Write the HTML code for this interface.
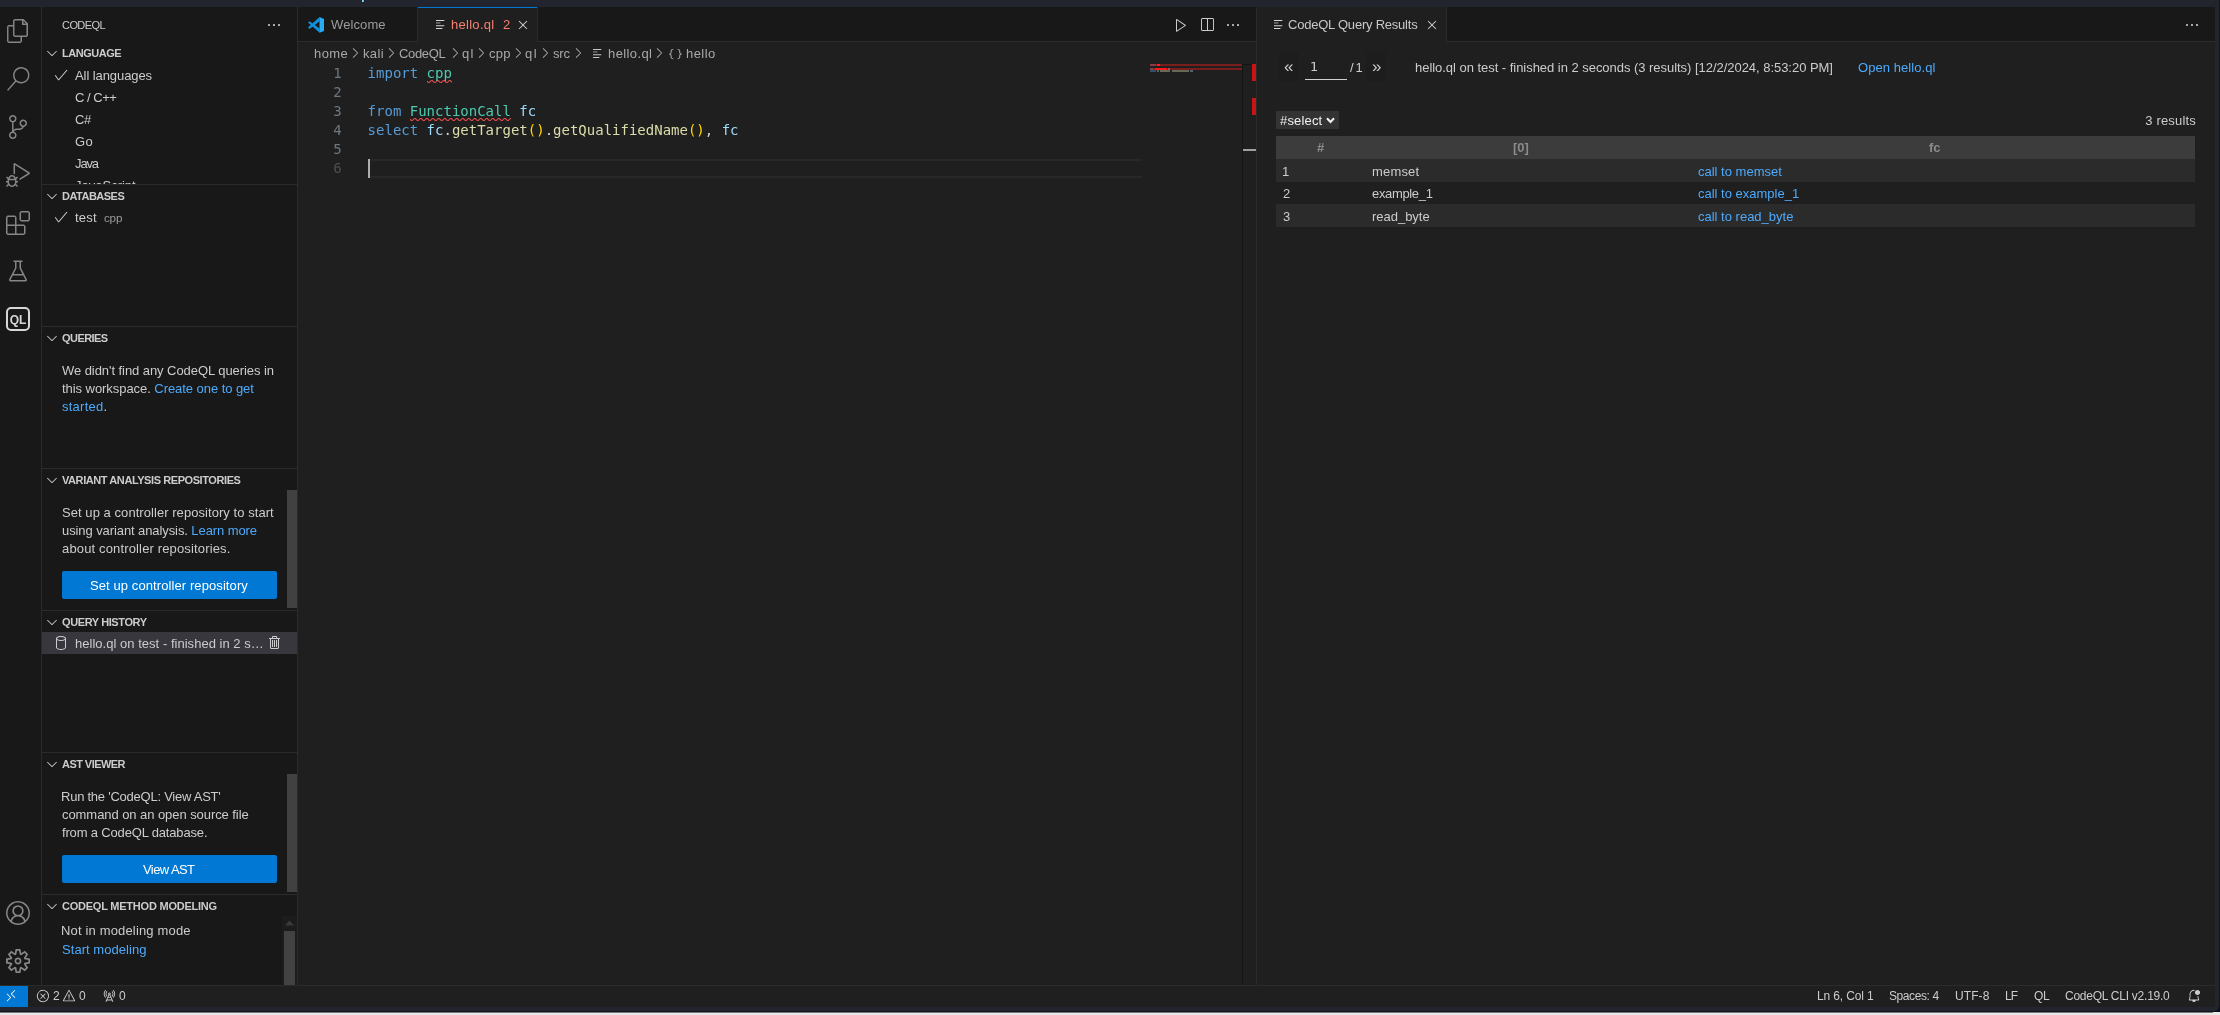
<!DOCTYPE html>
<html lang="en"><head><meta charset="utf-8"><title>hello.ql - CodeQL - Visual Studio Code</title>
<style>
html,body{margin:0;padding:0;}
body{width:2220px;height:1015px;overflow:hidden;background:#22252e;position:relative;font-family:"Liberation Sans",sans-serif;}
.b{position:absolute;}
.t{position:absolute;white-space:pre;}
.ic{position:absolute;display:block;overflow:visible;}
a{color:inherit;text-decoration:none;}
#app{position:absolute;left:0;top:0;width:2220px;height:1015px;will-change:transform;}
</style></head>
<body>
<div id="app">
<div class="b" style="left:0px;top:0px;width:2220px;height:1015px;background:#e8e9eb;"></div>
<div class="b" style="left:2213px;top:1005px;width:7px;height:7px;background:#0b0e2a;"></div>
<div class="b" style="left:0px;top:0px;width:2220px;height:1012px;background:#121419;border-bottom-right-radius:6px;"></div>
<div class="b" style="left:0px;top:0px;width:2219px;height:1010.7px;background:#22252e;border-bottom-right-radius:5px;"></div>
<div class="b" style="left:0px;top:1011.7px;width:2213px;height:0.8px;background:#77787b;"></div>
<div class="b" style="left:360.8px;top:0px;width:4.2px;height:2.4px;background:#171a3a;"></div>
<div class="b" style="left:361.8px;top:0px;width:1.3px;height:2.1px;background:#8fd3f4;"></div>
<div class="b" style="left:363.1px;top:0px;width:1.2px;height:2.1px;background:#e8944a;"></div>
<div class="b" style="left:0px;top:7px;width:2215px;height:1000px;background:#1f1f1f;"></div>
<div class="b" style="left:0px;top:7px;width:41px;height:978px;background:#181818;"></div>
<div class="b" style="left:41px;top:7px;width:1px;height:978px;background:#2b2b2b;"></div>
<div class="b" style="left:42px;top:7px;width:255px;height:978px;background:#181818;"></div>
<div class="b" style="left:297px;top:7px;width:1px;height:978px;background:#2b2b2b;"></div>
<div class="b" style="left:298px;top:7px;width:958px;height:35px;background:#181818;border-bottom:1px solid #2b2b2b;box-sizing:border-box;"></div>
<div class="b" style="left:1257px;top:7px;width:958px;height:35px;background:#181818;border-bottom:1px solid #2b2b2b;box-sizing:border-box;"></div>
<div class="b" style="left:1256px;top:7px;width:1px;height:978px;background:#2b2b2b;"></div>
<div class="b" style="left:0px;top:985px;width:2215px;height:22px;background:#1f1f1f;border-top:1px solid #2b2b2b;box-sizing:border-box;"></div>
<div class="b" style="left:0px;top:986px;width:28px;height:21px;background:#0078d4;"></div>
<svg class="ic" style="left:6px;top:19px;width:24px;height:24px;" viewBox="0 0 16 16"><path fill="#868686" d="M11.68 0H5.65L4.69 1.01V4H1.65L0.69 5.01V15.04L1.65 16H9.71L10.67 15.04V12H13.81L14.67 11.04V2.99ZM11.68 1.39 13.28 2.99H11.68ZM9.65 14.99H1.65V5.01H4.69V11.04L5.65 12H9.65ZM13.65 10.99H5.65V1.01H10.67V4H13.65Z"/></svg>
<svg class="ic" style="left:6px;top:67px;width:24px;height:24px;" viewBox="0 0 16 16"><path fill="#868686" d="M10.19 0Q8.53 0 7.17 0.88Q5.81 1.76 5.15 3.25Q4.48 4.75 4.72 6.35Q4.96 7.95 6.03 9.12L0.69 15.25L1.44 15.89L6.77 9.81Q8.21 10.93 10 10.99Q11.79 11.04 13.28 10.03Q14.77 9.01 15.36 7.31Q15.95 5.6 15.41 3.87Q14.88 2.13 13.41 1.07Q11.95 0 10.19 0ZM10.19 9.97Q8.96 9.97 7.92 9.39Q6.88 8.8 6.27 7.76Q5.65 6.72 5.65 5.49Q5.65 4.27 6.27 3.23Q6.88 2.19 7.92 1.6Q8.96 1.01 10.19 1.01Q11.41 1.01 12.43 1.6Q13.44 2.19 14.05 3.23Q14.67 4.27 14.67 5.49Q14.67 6.72 14.05 7.76Q13.44 8.8 12.43 9.41Q11.41 10.03 10.19 10.03Z"/></svg>
<svg class="ic" style="left:6px;top:115px;width:24px;height:24px;" viewBox="0 0 16 16"><path fill="#868686" d="M14.03 5.49Q14.03 4.8 13.65 4.19Q13.28 3.57 12.64 3.25Q12 2.93 11.31 2.99Q10.61 3.04 10.03 3.47Q9.44 3.89 9.2 4.56Q8.96 5.23 9.07 5.92Q9.17 6.61 9.65 7.12Q10.13 7.63 10.83 7.84Q10.56 8.37 10.08 8.67Q9.6 8.96 9.01 8.96H7.04Q5.87 8.96 5.01 9.76V4.91Q5.97 4.75 6.53 3.97Q7.09 3.2 7.01 2.24Q6.93 1.28 6.21 0.64Q5.49 0 4.53 0Q3.57 0 2.85 0.64Q2.13 1.28 2.05 2.24Q1.97 3.2 2.53 3.97Q3.09 4.75 4.05 4.91V10.99Q3.09 11.2 2.51 11.95Q1.92 12.69 2 13.65Q2.08 14.61 2.75 15.28Q3.41 15.95 4.37 16Q5.33 16.05 6.08 15.47Q6.83 14.88 6.99 13.92Q7.15 12.96 6.67 12.16Q6.19 11.36 5.23 11.09Q5.49 10.56 5.97 10.27Q6.45 9.97 7.04 9.97H9.01Q9.97 9.97 10.75 9.41Q11.52 8.85 11.84 7.95Q12.75 7.84 13.39 7.12Q14.03 6.4 14.03 5.49ZM3.04 2.51Q3.04 1.87 3.47 1.44Q3.89 1.01 4.53 1.01Q5.17 1.01 5.6 1.44Q6.03 1.87 6.03 2.48Q6.03 3.09 5.6 3.55Q5.17 4 4.53 4Q3.89 4 3.47 3.55Q3.04 3.09 3.04 2.51ZM6.03 13.44Q6.03 14.08 5.6 14.51Q5.17 14.93 4.53 14.93Q3.89 14.93 3.47 14.51Q3.04 14.08 3.04 13.47Q3.04 12.85 3.47 12.4Q3.89 11.95 4.53 11.95Q5.17 11.95 5.6 12.4Q6.03 12.85 6.03 13.44ZM11.52 6.99Q10.88 6.99 10.45 6.53Q10.03 6.08 10.03 5.47Q10.03 4.85 10.45 4.43Q10.88 4 11.49 4Q12.11 4 12.56 4.43Q13.01 4.85 13.01 5.47Q13.01 6.08 12.56 6.53Q12.11 6.99 11.52 6.99Z"/></svg>
<svg class="ic" style="left:6px;top:163px;width:24px;height:24px;" viewBox="0 0 16 16"><path fill="#868686" d="M7.31 9.01 6.4 9.87Q6.19 9.07 5.52 8.53Q4.85 8 4 8Q3.15 8 2.48 8.53Q1.81 9.07 1.6 9.87L0.69 9.01L0 9.71L1.17 10.83L1.01 10.99V12H0V13.01H1.01V13.07Q1.07 13.55 1.28 14.03L0 15.31L0.69 16L1.81 14.88Q2.19 15.41 2.77 15.71Q3.36 16 4 16Q4.64 16 5.23 15.71Q5.81 15.41 6.19 14.88L7.31 16L8 15.31L6.72 13.97Q6.93 13.55 6.99 13.01V12.96H8V12H6.99V10.99L6.88 10.83L8 9.71ZM4 9.01Q4.64 9.01 5.07 9.44Q5.49 9.87 5.49 10.51H2.51Q2.51 9.87 2.93 9.44Q3.36 9.01 4 9.01ZM6.03 13.01Q5.92 13.81 5.36 14.37Q4.8 14.93 4 14.99Q3.2 14.93 2.64 14.37Q2.08 13.81 2.03 13.01V11.52H6.03ZM15.84 6.4V7.25L9.01 11.57V10.4L14.67 6.83L6.03 1.33V7.63Q5.55 7.31 5.01 7.15V0.43L5.76 0Z"/></svg>
<svg class="ic" style="left:6px;top:211px;width:24px;height:24px;" viewBox="0 0 16 16"><path fill="#868686" d="M9.01 1.01 10.03 0H14.99L16 1.01V5.97L14.99 6.99H10.03L9.01 5.97ZM10.03 1.01V5.97H14.99V1.01ZM0 9.97V4L1.01 2.99H6.03L6.99 4V9.01H12L13.01 9.97V14.99L12 16H1.01L0 14.99ZM6.03 9.01V4H1.01V9.01ZM6.03 9.97H1.01V14.99H6.03ZM6.99 14.99H12V9.97H6.99Z"/></svg>
<svg class="ic" style="left:6px;top:259px;width:24px;height:24px;" viewBox="0 0 16 16"><path fill="#868686" d="M13.87 13.55 10.03 6.03V2.03H10.99V1.01H5.01V1.97H6.03V5.97L2.08 13.55Q1.87 14.08 2.16 14.53Q2.45 14.99 2.99 14.99H13.01Q13.55 14.99 13.84 14.53Q14.13 14.08 13.87 13.55ZM6.88 6.4 6.99 6.19V2.03H9.01V6.24L10.93 10.03H5.07ZM2.99 14.03 4.53 10.99H11.47L13.01 14.03Z"/></svg>
<svg class="ic" style="left:6px;top:307px;width:24px;height:24px" viewBox="0 0 24 24"><rect x="1" y="1" width="22" height="22" rx="4" fill="none" stroke="#d7d7d7" stroke-width="2"/><text x="12" y="16.8" text-anchor="middle" font-family="Liberation Sans, sans-serif" font-weight="700" font-size="12" fill="#d7d7d7">QL</text></svg>
<svg class="ic" style="left:6px;top:901px;width:24px;height:24px;" viewBox="0 0 16 16"><path fill="#868686" d="M16 8Q16 5.81 14.93 3.97Q13.87 2.13 12.03 1.07Q10.19 0 8 0Q5.81 0 3.97 1.07Q2.13 2.13 1.07 3.97Q0 5.81 0 8Q0 9.76 0.75 11.36Q1.49 12.96 2.83 14.08L3.52 14.61Q5.55 16 8 16Q10.45 16 12.48 14.61L13.23 14.08Q14.51 12.96 15.25 11.36Q16 9.76 16 8ZM8 14.99Q5.81 14.99 4 13.71L4.05 13.33Q4.21 12.8 4.48 12.35Q4.75 11.89 5.12 11.52Q5.49 11.15 5.92 10.88Q6.35 10.61 6.91 10.48Q7.47 10.35 8 10.35Q8.8 10.35 9.57 10.64Q10.35 10.93 10.91 11.49Q11.47 12.05 11.79 12.8Q11.95 13.23 12.05 13.71Q10.24 14.99 8 14.99ZM5.55 7.57Q5.33 7.09 5.33 6.56Q5.33 6.03 5.55 5.55Q5.76 5.07 6.11 4.72Q6.45 4.37 6.93 4.13Q7.41 3.89 8 3.89Q8.59 3.89 9.04 4.11Q9.49 4.32 9.87 4.69Q10.24 5.07 10.45 5.55Q10.67 6.03 10.67 6.59Q10.67 7.15 10.45 7.6Q10.24 8.05 9.87 8.43Q9.49 8.8 9.01 9.01Q8 9.44 6.93 9.01Q6.51 8.8 6.13 8.43Q5.76 8.05 5.55 7.57ZM12.96 12.91Q12.96 12.91 12.96 12.85V12.8Q12.75 12.05 12.29 11.41Q11.84 10.77 11.2 10.29Q10.72 9.92 10.13 9.65Q10.4 9.49 10.61 9.28Q10.99 8.91 11.25 8.48Q11.79 7.63 11.73 6.56Q11.79 5.81 11.49 5.12Q11.2 4.43 10.67 3.89Q10.13 3.36 9.44 3.09Q8.75 2.83 7.97 2.83Q7.2 2.83 6.51 3.09Q5.81 3.36 5.31 3.89Q4.8 4.43 4.51 5.12Q4.21 5.81 4.21 6.56Q4.21 7.09 4.37 7.6Q4.53 8.11 4.75 8.48Q4.96 8.85 5.39 9.28Q5.6 9.49 5.87 9.71Q5.33 9.92 4.85 10.29Q4.21 10.77 3.76 11.41Q3.31 12.05 3.04 12.85V12.91Q2.08 11.95 1.55 10.67Q1.01 9.39 1.01 8Q1.01 6.08 1.95 4.48Q2.88 2.88 4.48 1.95Q6.08 1.01 8 1.01Q9.92 1.01 11.52 1.95Q13.12 2.88 14.05 4.48Q14.99 6.08 14.99 8Q14.99 9.39 14.48 10.67Q13.97 11.95 12.96 12.91Z"/></svg>
<svg class="ic" style="left:6px;top:949px;width:24px;height:24px;" viewBox="0 0 16 16"><path fill="#868686" d="M13.23 5.81 16 6.4V9.6L13.23 10.19L14.83 12.53L12.53 14.77L10.19 13.23L9.6 16H6.4L5.81 13.23L3.47 14.83L1.23 12.53L2.77 10.19L0 9.6V6.4L2.77 5.81L1.23 3.47L3.47 1.17L5.81 2.77L6.4 0H9.6L10.19 2.77L12.53 1.17L14.83 3.47ZM12.21 9.23 14.88 8.69V7.36L12.21 6.77L11.84 5.92L13.33 3.63L12.43 2.67L10.13 4.21L9.23 3.84L8.69 1.17H7.36L6.83 3.84L5.97 4.21L3.68 2.67L2.72 3.63L4.27 5.92L3.89 6.77L1.23 7.36V8.69L3.89 9.23L4.27 10.08L2.72 12.37L3.68 13.33L5.97 11.79L6.83 12.16L7.36 14.83H8.69L9.23 12.16L10.13 11.79L12.43 13.33L13.33 12.37L11.84 10.08ZM6.72 6.08Q7.31 5.71 8 5.71Q8.96 5.71 9.63 6.37Q10.29 7.04 10.29 8Q10.29 8.8 9.76 9.44Q9.23 10.08 8.43 10.24Q7.63 10.4 6.91 10.03Q6.19 9.65 5.89 8.88Q5.6 8.11 5.81 7.33Q6.03 6.56 6.72 6.08ZM7.36 8.96Q7.68 9.12 8 9.12Q8.48 9.12 8.8 8.8Q9.12 8.48 9.12 8.03Q9.12 7.57 8.88 7.28Q8.64 6.99 8.24 6.91Q7.84 6.83 7.47 7.01Q7.09 7.2 6.93 7.57Q6.77 7.95 6.91 8.35Q7.04 8.75 7.36 8.96Z"/></svg>
<svg class="ic" style="left:266px;top:17px;width:16px;height:16px;" viewBox="0 0 16 16"><path fill="#cccccc" d="M4 8Q4 8.43 3.71 8.72Q3.41 9.01 2.99 9.01Q2.56 9.01 2.29 8.72Q2.03 8.43 2.03 8Q2.03 7.57 2.29 7.28Q2.56 6.99 2.99 6.99Q3.41 6.99 3.71 7.28Q4 7.57 4 8ZM9.01 8Q9.01 8.43 8.72 8.72Q8.43 9.01 8 9.01Q7.57 9.01 7.28 8.72Q6.99 8.43 6.99 8Q6.99 7.57 7.28 7.28Q7.57 6.99 8 6.99Q8.43 6.99 8.72 7.28Q9.01 7.57 9.01 8ZM14.03 8Q14.03 8.43 13.73 8.72Q13.44 9.01 13.01 9.01Q12.59 9.01 12.29 8.72Q12 8.43 12 8Q12 7.57 12.29 7.28Q12.59 6.99 13.01 6.99Q13.44 6.99 13.73 7.28Q14.03 7.57 14.03 8Z"/></svg>
<svg class="ic" style="left:44px;top:44.9px;width:16px;height:16px;" viewBox="0 0 16 16"><path fill="#cccccc" d="M8 10.08 12.32 5.71 12.96 6.35 8.27 10.99H7.68L2.99 6.35L3.63 5.71Z"/></svg>
<svg class="ic" style="left:53px;top:67.1px;width:16px;height:16px;" viewBox="0 0 16 16"><path fill="#cccccc" d="M14.45 3.31 5.97 13.33 5.17 13.28 1.81 8.53 2.61 7.95 5.6 12.16 13.65 2.67Z"/></svg>
<div class="b" style="left:42px;top:172px;width:255px;height:12px;overflow:hidden"><span class="t" style="left:33px;top:5.5px;font:400 13px/15px 'Liberation Sans',sans-serif;color:#cccccc">JavaScript</span></div>
<div class="b" style="left:42px;top:184px;width:255px;height:1px;background:#2b2b2b;"></div>
<svg class="ic" style="left:44px;top:188.2px;width:16px;height:16px;" viewBox="0 0 16 16"><path fill="#cccccc" d="M8 10.08 12.32 5.71 12.96 6.35 8.27 10.99H7.68L2.99 6.35L3.63 5.71Z"/></svg>
<svg class="ic" style="left:53px;top:209.1px;width:16px;height:16px;" viewBox="0 0 16 16"><path fill="#cccccc" d="M14.45 3.31 5.97 13.33 5.17 13.28 1.81 8.53 2.61 7.95 5.6 12.16 13.65 2.67Z"/></svg>
<div class="b" style="left:42px;top:326px;width:255px;height:1px;background:#2b2b2b;"></div>
<svg class="ic" style="left:44px;top:329.79999999999995px;width:16px;height:16px;" viewBox="0 0 16 16"><path fill="#cccccc" d="M8 10.08 12.32 5.71 12.96 6.35 8.27 10.99H7.68L2.99 6.35L3.63 5.71Z"/></svg>
<div class="b" style="left:42px;top:468px;width:255px;height:1px;background:#2b2b2b;"></div>
<svg class="ic" style="left:44px;top:472.09999999999997px;width:16px;height:16px;" viewBox="0 0 16 16"><path fill="#cccccc" d="M8 10.08 12.32 5.71 12.96 6.35 8.27 10.99H7.68L2.99 6.35L3.63 5.71Z"/></svg>
<div class="b" style="left:287px;top:490px;width:10px;height:118px;background:#414141;"></div>
<div class="b" style="left:62px;top:571px;width:215px;height:28px;background:#0078d4;border-radius:2px;"></div>
<div class="b" style="left:42px;top:610px;width:255px;height:1px;background:#2b2b2b;"></div>
<svg class="ic" style="left:44px;top:613.7px;width:16px;height:16px;" viewBox="0 0 16 16"><path fill="#cccccc" d="M8 10.08 12.32 5.71 12.96 6.35 8.27 10.99H7.68L2.99 6.35L3.63 5.71Z"/></svg>
<div class="b" style="left:42px;top:632px;width:255px;height:22px;background:#37373d;"></div>
<svg class="ic" style="left:53px;top:635px;width:16px;height:16px;" viewBox="0 0 16 16"><path fill="#cccccc" d="M13.01 3.52Q13.01 2.83 12.35 2.24Q11.68 1.65 10.51 1.33Q9.33 1.01 8 1.01Q6.67 1.01 5.49 1.33Q4.32 1.65 3.65 2.24Q2.99 2.83 2.99 3.52L3.04 3.63H2.99V12.48L3.04 12.85Q3.25 13.76 4.67 14.37Q6.08 14.99 8 14.99Q9.92 14.99 11.33 14.37Q12.75 13.76 12.96 12.85L13.01 12.48V3.63H12.96ZM8 2.03Q9.12 2.03 10.13 2.29Q10.99 2.51 11.49 2.88Q12 3.25 12 3.52Q12 3.79 11.49 4.13Q10.99 4.48 10.13 4.69Q9.12 4.96 8 4.96Q6.88 4.96 5.87 4.69Q5.01 4.48 4.51 4.13Q4 3.79 4 3.52Q4 3.25 4.51 2.88Q5.01 2.51 5.87 2.29Q6.88 2.03 8 2.03ZM12 12.48 11.95 12.64Q11.89 12.91 11.39 13.23Q10.88 13.55 10.08 13.76Q9.12 14.03 8 14.03Q6.88 14.03 5.92 13.76Q5.12 13.55 4.61 13.23Q4.11 12.91 4.05 12.64L4 12.48V5.01Q5.87 6.08 8 6.03Q10.13 6.08 12 4.96Z"/></svg>
<svg class="ic" style="left:267px;top:635px;width:16px;height:16px;" viewBox="0 0 16 16"><path fill="#cccccc" d="M10.03 2.99H13.01V4H12V13.01L10.99 13.97H4L2.99 13.01V4H2.03V2.99H5.01V1.97Q5.01 1.6 5.31 1.31Q5.6 1.01 6.03 1.01H9.01Q9.44 1.01 9.73 1.31Q10.03 1.6 10.03 1.97ZM9.01 1.97H6.03V2.99H9.01ZM4 13.01H10.99V4H4ZM6.03 5.01H5.01V12H6.03ZM6.99 5.01H8V12H6.99ZM9.01 5.01H10.03V12H9.01Z"/></svg>
<div class="b" style="left:42px;top:752px;width:255px;height:1px;background:#2b2b2b;"></div>
<svg class="ic" style="left:44px;top:756.2px;width:16px;height:16px;" viewBox="0 0 16 16"><path fill="#cccccc" d="M8 10.08 12.32 5.71 12.96 6.35 8.27 10.99H7.68L2.99 6.35L3.63 5.71Z"/></svg>
<div class="b" style="left:287px;top:774px;width:10px;height:118px;background:#414141;"></div>
<div class="b" style="left:62px;top:855px;width:215px;height:28px;background:#0078d4;border-radius:2px;"></div>
<div class="b" style="left:42px;top:894px;width:255px;height:1px;background:#2b2b2b;"></div>
<svg class="ic" style="left:44px;top:897.9px;width:16px;height:16px;" viewBox="0 0 16 16"><path fill="#cccccc" d="M8 10.08 12.32 5.71 12.96 6.35 8.27 10.99H7.68L2.99 6.35L3.63 5.71Z"/></svg>
<div class="b" style="left:282px;top:916px;width:15px;height:69px;background:#1c1c1c;"></div>
<div class="b" style="left:284px;top:931px;width:11px;height:54px;background:#424242;"></div>
<svg class="ic" style="left:285px;top:920px;width:9px;height:6px" viewBox="0 0 9 6"><path d="M0 5.5 4.5 0.5 9 5.5Z" fill="#3a3a3a"/></svg>
<svg class="ic" style="left:4px;top:989.1px;width:14px;height:14px;" viewBox="0 0 16 16"><path fill="#ffffff" d="M12.91 9.55 8.91 5.6 12.91 1.6 12.27 1.01 8 5.28V5.92L12.27 10.19ZM2.99 5.6 7.09 9.71 2.99 13.76 3.63 14.4 8 9.97V9.39L3.63 5.01Z"/></svg>
<svg class="ic" style="left:36px;top:989px;width:14px;height:14px;" viewBox="0 0 16 16"><path fill="#cccccc" d="M8.59 1.01Q9.76 1.07 10.85 1.6Q11.95 2.13 12.8 2.99Q14.83 5.17 14.83 8.11Q14.83 10.4 13.23 12.48Q12.43 13.44 11.41 14.05Q10.4 14.67 9.23 14.88Q6.67 15.36 4.59 14.19Q3.52 13.6 2.72 12.69Q1.92 11.79 1.49 10.67Q1.07 9.55 0.99 8.32Q0.91 7.09 1.28 5.97Q2.08 3.52 4.11 2.19Q5.07 1.55 6.21 1.23Q7.36 0.91 8.59 1.01ZM9.12 13.92Q11.15 13.44 12.48 11.79Q13.81 9.97 13.71 8Q13.71 6.77 13.25 5.65Q12.8 4.53 12 3.68Q10.45 2.13 8.43 1.97Q7.41 1.92 6.4 2.16Q5.39 2.4 4.59 2.99Q2.88 4.27 2.27 6.35Q1.65 8.43 2.53 10.35Q3.41 12.27 5.23 13.28Q6.08 13.81 7.09 13.97Q8.11 14.13 9.12 13.92ZM7.89 7.52 10.29 5.01 10.99 5.71 8.59 8.21 10.99 10.72 10.29 11.41 7.89 8.91 5.49 11.41 4.8 10.72 7.2 8.21 4.8 5.71 5.49 5.01Z"/></svg>
<svg class="ic" style="left:62px;top:989px;width:14px;height:14px;" viewBox="0 0 16 16"><path fill="#cccccc" d="M7.57 1.01H8.43L14.99 13.28L14.56 13.97H1.44L1.01 13.28ZM8 2.29 2.29 13.01H13.71ZM8.64 12V10.99H7.36V12ZM7.36 9.97V5.97H8.64V9.97Z"/></svg>
<svg class="ic" style="left:102px;top:989px;width:14px;height:14px;" viewBox="0 0 16 16"><path fill="#cccccc" d="M2.99 5.6Q2.99 4.48 3.41 3.47Q3.84 2.45 4.64 1.71L3.89 1.01Q2.99 1.92 2.48 3.09Q1.97 4.27 1.97 5.57Q1.97 6.88 2.48 8.05Q2.99 9.23 3.89 10.13L4.64 9.44Q3.84 8.69 3.41 7.68Q2.99 6.67 2.99 5.6ZM4.05 5.6Q4.05 6.45 4.4 7.28Q4.75 8.11 5.39 8.75L6.08 8.05Q5.6 7.57 5.33 6.93Q5.07 6.29 5.07 5.6Q5.07 4.91 5.33 4.27Q5.6 3.63 6.08 3.15L5.39 2.4Q4.75 3.04 4.4 3.87Q4.05 4.69 4.05 5.6ZM11.73 8.8 10.99 8.05Q11.52 7.57 11.79 6.93Q12.05 6.29 12.05 5.6Q12.05 4.91 11.79 4.27Q11.52 3.63 10.99 3.15L11.73 2.45Q12.32 3.09 12.67 3.92Q13.01 4.75 13.01 5.63Q13.01 6.51 12.67 7.33Q12.32 8.16 11.73 8.8ZM13.07 1.01 12.37 1.71Q13.12 2.45 13.55 3.47Q13.97 4.48 13.97 5.57Q13.97 6.67 13.55 7.68Q13.12 8.69 12.37 9.44L13.07 10.13Q13.97 9.23 14.48 8.05Q14.99 6.88 14.99 5.57Q14.99 4.27 14.48 3.09Q13.97 1.92 13.07 1.01ZM9.97 5.44Q10.03 5.97 9.76 6.4L9.49 6.61L12.91 14.35L12 14.77L11.25 13.01H5.71L4.91 14.77L4 14.35L7.41 6.61Q7.15 6.29 7.04 5.87Q6.93 5.44 7.12 5.01Q7.31 4.59 7.65 4.35Q8 4.11 8.4 4.08Q8.8 4.05 9.15 4.21Q9.49 4.37 9.73 4.69Q9.97 5.01 9.97 5.44ZM8.37 5.07Q8.27 5.12 8.16 5.23Q8.05 5.33 8.03 5.47Q8 5.6 8.05 5.73Q8.11 5.87 8.24 5.95Q8.37 6.03 8.53 6.03Q8.69 6.03 8.85 5.89Q9.01 5.76 9.01 5.57Q9.01 5.39 8.91 5.28Q8.8 5.17 8.67 5.12Q8.53 5.07 8.37 5.07ZM8.64 7.15H8.37L7.47 9.07H9.49ZM10.83 12.05 9.92 10.08H7.04L6.19 12.05Z"/></svg>
<svg class="ic" style="left:2186.5px;top:989px;width:14px;height:14px;" viewBox="0 0 16 16"><path fill="#cccccc" d="M13.01 7.89Q12.53 8 12 8V8.21Q12 9.6 12.43 10.93L12.8 12H3.15L3.52 10.88Q4 9.55 4 8.21V6.03Q4 5.17 4.35 4.37Q4.69 3.57 5.31 3.01Q5.92 2.45 6.75 2.19Q7.57 1.92 8.37 2.03H8.53Q8.8 1.55 9.17 1.17Q8.85 1.07 8.48 1.01Q7.41 0.91 6.4 1.25Q5.39 1.6 4.61 2.32Q3.84 3.04 3.41 4Q2.99 4.96 2.99 6.03V8.21Q2.99 9.39 2.61 10.56L2.03 12.32L2.45 13.01H5.97Q5.97 13.81 6.56 14.4Q7.15 14.99 7.97 14.99Q8.8 14.99 9.39 14.4Q9.97 13.81 9.97 13.01H13.49L13.97 12.32L13.39 10.56Q13.01 9.39 13.01 8.21ZM8 14.03Q8.37 14.03 8.69 13.73Q9.01 13.44 8.96 13.01H6.99Q6.99 13.44 7.28 13.73Q7.57 14.03 8 14.03ZM12 6.99Q13.23 6.99 14.11 6.11Q14.99 5.23 14.99 4Q14.99 2.77 14.11 1.89Q13.23 1.01 12 1.01Q10.77 1.01 9.89 1.89Q9.01 2.77 9.01 4Q9.01 5.23 9.89 6.11Q10.77 6.99 12 6.99Z"/></svg>
<div class="b" style="left:417px;top:7px;width:1px;height:35px;background:#2b2b2b;"></div>
<svg class="ic" style="left:307px;top:16px;width:18px;height:18px" viewBox="307 16 18 18"><path fill="#0c93de" d="M319.6 17.1V21.3L309.5 28.9L308 27.45Z"/><path fill="#0c93de" d="M319.6 32.8V28.6L309.5 21.2L308 22.45Z"/><path fill="#29aaf5" d="M319.5 17.05L324 18.9V31L319.5 32.85Z"/></svg>
<div class="b" style="left:418px;top:7px;width:119px;height:35px;background:#1f1f1f;"></div>
<div class="b" style="left:418px;top:7px;width:119px;height:1px;background:#0078d4;"></div>
<div class="b" style="left:537px;top:7px;width:1px;height:35px;background:#2b2b2b;"></div>
<svg class="ic" style="left:435.8px;top:19.9px;width:8.4px;height:9.2px" viewBox="0 0 8.4 9.2"><path fill="#d4d7d6" d="M0 .1h8.3v1H0zM0 5.15h8.3v1H0zM0 7.95h6.4v1H0z"/><path fill="#d4d7d6" opacity=".7" d="M0 2.45h4.4v1H0z"/></svg>
<svg class="ic" style="left:515px;top:17px;width:16px;height:16px;" viewBox="0 0 16 16"><path fill="#cccccc" d="M8 8.69 11.63 12.37 12.37 11.63 8.69 8 12.37 4.37 11.63 3.63 8 7.31 4.37 3.63 3.63 4.37 7.31 8 3.63 11.63 4.37 12.37Z"/></svg>
<svg class="ic" style="left:1173px;top:17px;width:16px;height:16px;" viewBox="0 0 16 16"><path fill="#cccccc" d="M3.79 1.97 2.99 2.4V14.4L3.79 14.83L12.8 8.85V8ZM4 13.49V3.36L11.63 8.43Z"/></svg>
<svg class="ic" style="left:1199px;top:17px;width:16px;height:16px;" viewBox="0 0 16 16"><path fill="#cccccc" d="M14.03 1.01H2.99L2.03 1.97V13.01L2.99 13.97H14.03L14.99 13.01V1.97ZM8 13.01H2.99V1.97H8ZM14.03 13.01H9.01V1.97H14.03Z"/></svg>
<svg class="ic" style="left:1225px;top:17px;width:16px;height:16px;" viewBox="0 0 16 16"><path fill="#cccccc" d="M4 8Q4 8.43 3.71 8.72Q3.41 9.01 2.99 9.01Q2.56 9.01 2.29 8.72Q2.03 8.43 2.03 8Q2.03 7.57 2.29 7.28Q2.56 6.99 2.99 6.99Q3.41 6.99 3.71 7.28Q4 7.57 4 8ZM9.01 8Q9.01 8.43 8.72 8.72Q8.43 9.01 8 9.01Q7.57 9.01 7.28 8.72Q6.99 8.43 6.99 8Q6.99 7.57 7.28 7.28Q7.57 6.99 8 6.99Q8.43 6.99 8.72 7.28Q9.01 7.57 9.01 8ZM14.03 8Q14.03 8.43 13.73 8.72Q13.44 9.01 13.01 9.01Q12.59 9.01 12.29 8.72Q12 8.43 12 8Q12 7.57 12.29 7.28Q12.59 6.99 13.01 6.99Q13.44 6.99 13.73 7.28Q14.03 7.57 14.03 8Z"/></svg>
<svg class="ic" style="left:347.3px;top:45px;width:16px;height:16px;" viewBox="0 0 16 16"><path fill="#a9a9a9" d="M10.08 8 5.71 3.68 6.35 3.04 10.99 7.73V8.32L6.35 13.01L5.71 12.37Z"/></svg>
<svg class="ic" style="left:383.0px;top:45px;width:16px;height:16px;" viewBox="0 0 16 16"><path fill="#a9a9a9" d="M10.08 8 5.71 3.68 6.35 3.04 10.99 7.73V8.32L6.35 13.01L5.71 12.37Z"/></svg>
<svg class="ic" style="left:446.8px;top:45px;width:16px;height:16px;" viewBox="0 0 16 16"><path fill="#a9a9a9" d="M10.08 8 5.71 3.68 6.35 3.04 10.99 7.73V8.32L6.35 13.01L5.71 12.37Z"/></svg>
<svg class="ic" style="left:472.8px;top:45px;width:16px;height:16px;" viewBox="0 0 16 16"><path fill="#a9a9a9" d="M10.08 8 5.71 3.68 6.35 3.04 10.99 7.73V8.32L6.35 13.01L5.71 12.37Z"/></svg>
<svg class="ic" style="left:509.8px;top:45px;width:16px;height:16px;" viewBox="0 0 16 16"><path fill="#a9a9a9" d="M10.08 8 5.71 3.68 6.35 3.04 10.99 7.73V8.32L6.35 13.01L5.71 12.37Z"/></svg>
<svg class="ic" style="left:536.8px;top:45px;width:16px;height:16px;" viewBox="0 0 16 16"><path fill="#a9a9a9" d="M10.08 8 5.71 3.68 6.35 3.04 10.99 7.73V8.32L6.35 13.01L5.71 12.37Z"/></svg>
<svg class="ic" style="left:569.8px;top:45px;width:16px;height:16px;" viewBox="0 0 16 16"><path fill="#a9a9a9" d="M10.08 8 5.71 3.68 6.35 3.04 10.99 7.73V8.32L6.35 13.01L5.71 12.37Z"/></svg>
<svg class="ic" style="left:593.2px;top:48.6px;width:8.4px;height:9.2px" viewBox="0 0 8.4 9.2"><path fill="#c5c8c7" d="M0 .1h8.3v1H0zM0 5.15h8.3v1H0zM0 7.95h6.4v1H0z"/><path fill="#c5c8c7" opacity=".7" d="M0 2.45h4.4v1H0z"/></svg>
<svg class="ic" style="left:651.1999999999999px;top:45px;width:16px;height:16px;" viewBox="0 0 16 16"><path fill="#a9a9a9" d="M10.08 8 5.71 3.68 6.35 3.04 10.99 7.73V8.32L6.35 13.01L5.71 12.37Z"/></svg>
<svg class="ic" style="left:668.6px;top:48.8px;width:12.9px;height:10.2px" viewBox="2.03 1.97 12 12.06" preserveAspectRatio="none"><path fill="#a9a9a9" d="M6.03 2.99V1.97H5.92Q5.44 1.97 4.99 2.16Q4.53 2.35 4.21 2.69Q3.89 3.04 3.73 3.47Q3.57 3.89 3.52 4.32Q3.47 4.75 3.52 5.17V6.03Q3.52 6.35 3.41 6.61Q3.2 7.15 2.67 7.41Q2.4 7.52 2.08 7.52H2.03V8.48H2.08Q2.4 8.48 2.67 8.59V8.64Q2.93 8.75 3.09 8.91V8.96Q3.31 9.12 3.41 9.39Q3.52 9.65 3.52 9.97V10.83Q3.47 11.25 3.52 11.68V11.73Q3.57 12.11 3.73 12.53Q3.89 12.96 4.24 13.31Q4.59 13.65 5.01 13.81Q5.44 13.97 5.92 14.03H6.03V13.01H5.92Q5.6 13.01 5.33 12.91Q5.07 12.8 4.88 12.59Q4.69 12.37 4.59 12.11Q4.48 11.84 4.48 11.52V10.19Q4.48 9.87 4.43 9.55Q4.37 9.23 4.27 8.96Q4 8.37 3.52 8Q4 7.63 4.27 7.04Q4.37 6.77 4.43 6.45Q4.48 6.13 4.48 5.81V4.48Q4.48 4 4.72 3.65Q4.96 3.31 5.33 3.09Q5.6 2.99 5.92 2.99ZM10.03 13.01V13.97H10.08Q10.56 13.97 10.99 13.81Q11.41 13.65 11.76 13.31Q12.11 12.96 12.27 12.53Q12.43 12.16 12.48 11.68Q12.53 11.25 12.48 10.83V9.97Q12.48 9.65 12.59 9.39Q12.8 8.85 13.33 8.59Q13.6 8.48 13.92 8.48H14.03V7.52H13.92Q13.6 7.52 13.33 7.41V7.36Q13.07 7.25 12.91 7.09V7.04Q12.69 6.88 12.59 6.61Q12.48 6.35 12.48 6.03V5.17Q12.53 4.75 12.48 4.32V4.27Q12.43 3.89 12.27 3.47Q12.11 3.04 11.79 2.69Q11.47 2.35 11.01 2.16Q10.56 1.97 10.08 2.03H10.03V2.99H10.08Q10.4 2.99 10.67 3.09Q10.93 3.2 11.12 3.41Q11.31 3.63 11.41 3.89Q11.52 4.16 11.52 4.48V5.81Q11.52 6.13 11.57 6.45Q11.63 6.77 11.73 7.04Q12 7.63 12.48 8Q12 8.37 11.73 8.96Q11.63 9.23 11.57 9.55Q11.52 9.87 11.52 10.19V11.52Q11.52 12.16 11.09 12.59Q10.93 12.8 10.67 12.91Q10.4 13.01 10.08 13.01Z"/></svg>
<svg class="ic" style="left:427px;top:80px;width:25.3px;height:3px;overflow:hidden" viewBox="0 0 25.3 3"><defs><pattern id="sq1" width="6" height="3" patternUnits="userSpaceOnUse"><g fill="#f14c4c"><polygon points="5.5,0 2.5,3 1.1,3 4.1,0"/><polygon points="4,0 6,2 6,0.6 5.4,0"/><polygon points="0,2 1,3 2.4,3 0,0.6"/></g></pattern></defs><rect width="25.3" height="3" fill="url(#sq1)"/></svg>
<svg class="ic" style="left:410.1px;top:118px;width:101.2px;height:3px;overflow:hidden" viewBox="0 0 101.2 3"><defs><pattern id="sq2" width="6" height="3" patternUnits="userSpaceOnUse"><g fill="#f14c4c"><polygon points="5.5,0 2.5,3 1.1,3 4.1,0"/><polygon points="4,0 6,2 6,0.6 5.4,0"/><polygon points="0,2 1,3 2.4,3 0,0.6"/></g></pattern></defs><rect width="101.2" height="3" fill="url(#sq2)"/></svg>
<div class="b" style="left:368px;top:159px;width:774px;height:19px;background:transparent;border-top:2px solid #282828;border-bottom:2px solid #282828;box-sizing:border-box;"></div>
<div class="b" style="left:368px;top:159px;width:2px;height:19px;background:#aeafad;"></div>
<div class="b" style="left:1150px;top:64px;width:92px;height:2px;background:#7a1d1d;"></div>
<div class="b" style="left:1150px;top:68px;width:92px;height:2px;background:#7a1d1d;"></div>
<div class="b" style="left:1150px;top:64px;width:6px;height:2px;background:#8a3a4a;"></div>
<div class="b" style="left:1157px;top:64px;width:3px;height:2px;background:#ff1a1a;"></div>
<div class="b" style="left:1150px;top:68px;width:4px;height:2px;background:#8a3a4a;"></div>
<div class="b" style="left:1155px;top:68px;width:12px;height:2px;background:#ff1a1a;"></div>
<div class="b" style="left:1168px;top:68px;width:2px;height:2px;background:#9a5060;"></div>
<div class="b" style="left:1150px;top:70px;width:6px;height:2px;background:#3f6f9a;opacity:.6;"></div>
<div class="b" style="left:1157px;top:70px;width:2px;height:2px;background:#6f94ad;opacity:.6;"></div>
<div class="b" style="left:1160px;top:70px;width:10px;height:2px;background:#9a9a7c;opacity:.6;"></div>
<div class="b" style="left:1172px;top:70px;width:17px;height:2px;background:#9a9a7c;opacity:.6;"></div>
<div class="b" style="left:1190px;top:70px;width:3px;height:2px;background:#6f94ad;opacity:.6;"></div>
<div class="b" style="left:1242px;top:64px;width:1px;height:921px;background:#141414;"></div>
<div class="b" style="left:1242px;top:64px;width:14px;height:1px;background:#141414;"></div>
<div class="b" style="left:1252px;top:64px;width:4px;height:17px;background:#c81414;"></div>
<div class="b" style="left:1252px;top:98px;width:4px;height:17px;background:#c81414;"></div>
<div class="b" style="left:1243px;top:149.3px;width:13px;height:2px;background:#a0a0a0;"></div>
<div class="b" style="left:1257px;top:7px;width:189px;height:35px;background:#1f1f1f;"></div>
<div class="b" style="left:1446px;top:7px;width:1px;height:35px;background:#2b2b2b;"></div>
<svg class="ic" style="left:1273.6px;top:19.9px;width:8.4px;height:9.2px" viewBox="0 0 8.4 9.2"><path fill="#d4d7d6" d="M0 .1h8.3v1H0zM0 5.15h8.3v1H0zM0 7.95h6.4v1H0z"/><path fill="#d4d7d6" opacity=".7" d="M0 2.45h4.4v1H0z"/></svg>
<svg class="ic" style="left:1424px;top:17px;width:16px;height:16px;" viewBox="0 0 16 16"><path fill="#c8c8c8" d="M8 8.69 11.63 12.37 12.37 11.63 8.69 8 12.37 4.37 11.63 3.63 8 7.31 4.37 3.63 3.63 4.37 7.31 8 3.63 11.63 4.37 12.37Z"/></svg>
<svg class="ic" style="left:2183.5px;top:17px;width:16px;height:16px;" viewBox="0 0 16 16"><path fill="#cccccc" d="M4 8Q4 8.43 3.71 8.72Q3.41 9.01 2.99 9.01Q2.56 9.01 2.29 8.72Q2.03 8.43 2.03 8Q2.03 7.57 2.29 7.28Q2.56 6.99 2.99 6.99Q3.41 6.99 3.71 7.28Q4 7.57 4 8ZM9.01 8Q9.01 8.43 8.72 8.72Q8.43 9.01 8 9.01Q7.57 9.01 7.28 8.72Q6.99 8.43 6.99 8Q6.99 7.57 7.28 7.28Q7.57 6.99 8 6.99Q8.43 6.99 8.72 7.28Q9.01 7.57 9.01 8ZM14.03 8Q14.03 8.43 13.73 8.72Q13.44 9.01 13.01 9.01Q12.59 9.01 12.29 8.72Q12 8.43 12 8Q12 7.57 12.29 7.28Q12.59 6.99 13.01 6.99Q13.44 6.99 13.73 7.28Q14.03 7.57 14.03 8Z"/></svg>
<div class="b" style="left:1279px;top:52px;width:20px;height:30px;background:#1d1d1d;"></div>
<div class="b" style="left:1366px;top:52px;width:20px;height:30px;background:#1d1d1d;"></div>
<div class="b" style="left:1305px;top:78.7px;width:42px;height:1.5px;background:#d0d0d0;"></div>
<div class="b" style="left:1276px;top:111px;width:63px;height:18px;background:#333333;"></div>
<svg class="ic" style="left:1326px;top:116.5px;width:9px;height:7px" viewBox="0 0 9 7"><path d="M1 1.2 4.5 5 8 1.2" fill="none" stroke="#f0f0f0" stroke-width="2.1"/></svg>
<div class="b" style="left:1276px;top:136px;width:919px;height:23px;background:#3c3c3c;"></div>
<div class="b" style="left:1276px;top:159px;width:919px;height:22.7px;background:#2b2b2b;"></div>
<div class="b" style="left:1276px;top:204.3px;width:919px;height:22.7px;background:#2b2b2b;"></div>
<span class="t" style="top:19px;font:400 11px/12px 'Liberation Sans', sans-serif;color:#cccccc;left:62px;letter-spacing:-0.566px;">CODEQL</span>
<span class="t" style="top:47px;font:700 11px/12px 'Liberation Sans', sans-serif;color:#cccccc;left:62px;letter-spacing:-0.483px;">LANGUAGE</span>
<span class="t" style="top:68px;font:400 13px/15px 'Liberation Sans', sans-serif;color:#cccccc;left:75px;letter-spacing:-0.080px;">All languages</span>
<span class="t" style="top:90px;font:400 13px/15px 'Liberation Sans', sans-serif;color:#cccccc;left:75px;letter-spacing:-0.482px;">C / C++</span>
<span class="t" style="top:112px;font:400 13px/15px 'Liberation Sans', sans-serif;color:#cccccc;left:75px;letter-spacing:-0.295px;">C#</span>
<span class="t" style="top:134px;font:400 13px/15px 'Liberation Sans', sans-serif;color:#cccccc;left:75px;letter-spacing:0.458px;">Go</span>
<span class="t" style="top:156px;font:400 13px/15px 'Liberation Sans', sans-serif;color:#cccccc;left:75px;letter-spacing:-1.119px;">Java</span>
<span class="t" style="top:190px;font:700 11px/12px 'Liberation Sans', sans-serif;color:#cccccc;left:62px;letter-spacing:-0.506px;">DATABASES</span>
<span class="t" style="top:210px;font:400 13px/15px 'Liberation Sans', sans-serif;color:#cccccc;left:75px;letter-spacing:0.213px;">test</span>
<span class="t" style="top:211px;font:400 11.7px/13px 'Liberation Sans', sans-serif;color:#9a9a9a;left:104px;letter-spacing:-0.228px;">cpp</span>
<span class="t" style="top:332px;font:700 11px/12px 'Liberation Sans', sans-serif;color:#cccccc;left:62px;letter-spacing:-0.555px;">QUERIES</span>
<span class="t" style="top:363px;font:400 13px/15px 'Liberation Sans', sans-serif;color:#cccccc;left:62px;letter-spacing:-0.063px;">We didn't find any CodeQL queries in</span>
<span class="t" style="top:381px;font:400 13px/15px 'Liberation Sans', sans-serif;color:#cccccc;left:62px;letter-spacing:-0.055px;">this workspace. <a style="color:#4daafc">Create one to get</a></span>
<span class="t" style="top:399px;font:400 13px/15px 'Liberation Sans', sans-serif;color:#cccccc;left:62px;letter-spacing:0.256px;"><a style="color:#4daafc">started</a>.</span>
<span class="t" style="top:474px;font:700 11px/12px 'Liberation Sans', sans-serif;color:#cccccc;left:62px;letter-spacing:-0.422px;">VARIANT ANALYSIS REPOSITORIES</span>
<span class="t" style="top:505px;font:400 13px/15px 'Liberation Sans', sans-serif;color:#cccccc;left:62px;letter-spacing:0.056px;">Set up a controller repository to start</span>
<span class="t" style="top:523px;font:400 13px/15px 'Liberation Sans', sans-serif;color:#cccccc;left:62px;letter-spacing:-0.090px;">using variant analysis. <a style="color:#4daafc">Learn more</a></span>
<span class="t" style="top:541px;font:400 13px/15px 'Liberation Sans', sans-serif;color:#cccccc;left:62px;letter-spacing:0.149px;">about controller repositories.</span>
<span class="t" style="top:578px;font:400 13px/15px 'Liberation Sans', sans-serif;color:#ffffff;left:90px;letter-spacing:0.091px;">Set up controller repository</span>
<span class="t" style="top:616px;font:700 11px/12px 'Liberation Sans', sans-serif;color:#cccccc;left:62px;letter-spacing:-0.402px;">QUERY HISTORY</span>
<span class="t" style="top:636px;font:400 13px/15px 'Liberation Sans', sans-serif;color:#cccccc;left:75px;letter-spacing:0.026px;">hello.ql on test - finished in 2 s…</span>
<span class="t" style="top:758px;font:700 11px/12px 'Liberation Sans', sans-serif;color:#cccccc;left:62px;letter-spacing:-0.550px;">AST VIEWER</span>
<span class="t" style="top:789px;font:400 13px/15px 'Liberation Sans', sans-serif;color:#cccccc;left:61px;letter-spacing:-0.243px;">Run the 'CodeQL: View AST'</span>
<span class="t" style="top:807px;font:400 13px/15px 'Liberation Sans', sans-serif;color:#cccccc;left:62px;letter-spacing:-0.065px;">command on an open source file</span>
<span class="t" style="top:825px;font:400 13px/15px 'Liberation Sans', sans-serif;color:#cccccc;left:62px;letter-spacing:-0.164px;">from a CodeQL database.</span>
<span class="t" style="top:862px;font:400 13px/15px 'Liberation Sans', sans-serif;color:#ffffff;left:143px;letter-spacing:-0.583px;">View AST</span>
<span class="t" style="top:900px;font:700 11px/12px 'Liberation Sans', sans-serif;color:#cccccc;left:62px;letter-spacing:-0.227px;">CODEQL METHOD MODELING</span>
<span class="t" style="top:923px;font:400 13px/15px 'Liberation Sans', sans-serif;color:#cccccc;left:61px;letter-spacing:0.162px;">Not in modeling mode</span>
<span class="t" style="top:942px;font:400 13px/15px 'Liberation Sans', sans-serif;color:#4daafc;left:62px;letter-spacing:0.047px;">Start modeling</span>
<span class="t" style="top:989px;font:400 12px/14px 'Liberation Sans', sans-serif;color:#cccccc;left:53px;">2</span>
<span class="t" style="top:989px;font:400 12px/14px 'Liberation Sans', sans-serif;color:#cccccc;left:79px;">0</span>
<span class="t" style="top:989px;font:400 12px/14px 'Liberation Sans', sans-serif;color:#cccccc;left:119px;">0</span>
<span class="t" style="top:989px;font:400 12px/14px 'Liberation Sans', sans-serif;color:#cccccc;left:1817px;letter-spacing:-0.137px;">Ln 6, Col 1</span>
<span class="t" style="top:989px;font:400 12px/14px 'Liberation Sans', sans-serif;color:#cccccc;left:1889px;letter-spacing:-0.409px;">Spaces: 4</span>
<span class="t" style="top:989px;font:400 12px/14px 'Liberation Sans', sans-serif;color:#cccccc;left:1955px;letter-spacing:0.088px;">UTF-8</span>
<span class="t" style="top:989px;font:400 12px/14px 'Liberation Sans', sans-serif;color:#cccccc;left:2005px;letter-spacing:-0.939px;">LF</span>
<span class="t" style="top:989px;font:400 12px/14px 'Liberation Sans', sans-serif;color:#cccccc;left:2034px;letter-spacing:-0.441px;">QL</span>
<span class="t" style="top:989px;font:400 12px/14px 'Liberation Sans', sans-serif;color:#cccccc;left:2065px;letter-spacing:-0.248px;">CodeQL CLI v2.19.0</span>
<span class="t" style="top:17px;font:400 13px/15px 'Liberation Sans', sans-serif;color:#9d9d9d;left:331px;letter-spacing:0.099px;">Welcome</span>
<span class="t" style="top:17px;font:400 13px/15px 'Liberation Sans', sans-serif;color:#f88070;left:451px;letter-spacing:0.282px;">hello.ql</span>
<span class="t" style="top:17px;font:400 13px/15px 'Liberation Sans', sans-serif;color:#f88070;left:503px;">2</span>
<span class="t" style="top:46px;font:400 13px/15px 'Liberation Sans', sans-serif;color:#a9a9a9;left:314px;letter-spacing:0.420px;">home</span>
<span class="t" style="top:46px;font:400 13px/15px 'Liberation Sans', sans-serif;color:#a9a9a9;left:363px;letter-spacing:0.349px;">kali</span>
<span class="t" style="top:46px;font:400 13px/15px 'Liberation Sans', sans-serif;color:#a9a9a9;left:399px;letter-spacing:-0.346px;">CodeQL</span>
<span class="t" style="top:46px;font:400 13px/15px 'Liberation Sans', sans-serif;color:#a9a9a9;left:462px;letter-spacing:1.197px;">ql</span>
<span class="t" style="top:46px;font:400 13px/15px 'Liberation Sans', sans-serif;color:#a9a9a9;left:489px;letter-spacing:0.269px;">cpp</span>
<span class="t" style="top:46px;font:400 13px/15px 'Liberation Sans', sans-serif;color:#a9a9a9;left:525px;letter-spacing:1.597px;">ql</span>
<span class="t" style="top:46px;font:400 13px/15px 'Liberation Sans', sans-serif;color:#a9a9a9;left:553px;letter-spacing:-0.212px;">src</span>
<span class="t" style="top:46px;font:400 13px/15px 'Liberation Sans', sans-serif;color:#a9a9a9;left:608px;letter-spacing:0.396px;">hello.ql</span>
<span class="t" style="top:46px;font:400 13px/15px 'Liberation Sans', sans-serif;color:#a9a9a9;left:686px;letter-spacing:0.445px;">hello</span>
<span class="t" style="top:65px;font:400 14px/16px 'DejaVu Sans Mono', 'Liberation Mono', monospace;color:#6e7681;right:1878.4px;">1</span>
<span class="t" style="top:84px;font:400 14px/16px 'DejaVu Sans Mono', 'Liberation Mono', monospace;color:#6e7681;right:1878.4px;">2</span>
<span class="t" style="top:103px;font:400 14px/16px 'DejaVu Sans Mono', 'Liberation Mono', monospace;color:#6e7681;right:1878.4px;">3</span>
<span class="t" style="top:122px;font:400 14px/16px 'DejaVu Sans Mono', 'Liberation Mono', monospace;color:#6e7681;right:1878.4px;">4</span>
<span class="t" style="top:141px;font:400 14px/16px 'DejaVu Sans Mono', 'Liberation Mono', monospace;color:#6e7681;right:1878.4px;">5</span>
<span class="t" style="top:160px;font:400 14px/16px 'DejaVu Sans Mono', 'Liberation Mono', monospace;color:#4b4f56;right:1878.4px;">6</span>
<span class="t" style="top:65px;font:400 14px/16px 'DejaVu Sans Mono', 'Liberation Mono', monospace;color:#d4d4d4;left:367.6px;"><span style="color:#569cd6">import</span> <span style="color:#4ec9b0">cpp</span></span>
<span class="t" style="top:103px;font:400 14px/16px 'DejaVu Sans Mono', 'Liberation Mono', monospace;color:#d4d4d4;left:367.6px;"><span style="color:#569cd6">from</span> <span style="color:#4ec9b0">FunctionCall</span> <span style="color:#9cdcfe">fc</span></span>
<span class="t" style="top:122px;font:400 14px/16px 'DejaVu Sans Mono', 'Liberation Mono', monospace;color:#d4d4d4;left:367.6px;"><span style="color:#569cd6">select</span> <span style="color:#9cdcfe">fc</span>.<span style="color:#dcdcaa">getTarget</span><span style="color:#ffd700">()</span>.<span style="color:#dcdcaa">getQualifiedName</span><span style="color:#ffd700">()</span>, <span style="color:#9cdcfe">fc</span></span>
<span class="t" style="top:17px;font:400 13px/15px 'Liberation Sans', sans-serif;color:#c8c8c8;left:1288px;letter-spacing:-0.224px;">CodeQL Query Results</span>
<span class="t" style="top:57px;font:400 17px/19px 'Liberation Sans', sans-serif;color:#cccccc;left:1284px;">«</span>
<span class="t" style="top:59px;font:400 13px/15px 'DejaVu Sans', sans-serif;color:#cccccc;left:1310px;">1</span>
<span class="t" style="top:60px;font:400 13px/15px 'Liberation Sans', sans-serif;color:#cccccc;left:1350px;letter-spacing:-0.859px;">/ 1</span>
<span class="t" style="top:57px;font:400 17px/19px 'Liberation Sans', sans-serif;color:#cccccc;left:1372px;">»</span>
<span class="t" style="top:60px;font:400 13px/15px 'Liberation Sans', sans-serif;color:#cccccc;left:1415px;letter-spacing:-0.035px;">hello.ql on test - finished in 2 seconds (3 results) [12/2/2024, 8:53:20 PM]</span>
<span class="t" style="top:60px;font:400 13px/15px 'Liberation Sans', sans-serif;color:#4daafc;left:1858px;letter-spacing:0.065px;">Open hello.ql</span>
<span class="t" style="top:113px;font:400 13px/15px 'Liberation Sans', sans-serif;color:#f0f0f0;left:1280px;letter-spacing:0.160px;">#select</span>
<span class="t" style="top:113px;font:400 13px/15px 'Liberation Sans', sans-serif;color:#cccccc;right:24.051025390625px;letter-spacing:0.179px;">3 results</span>
<span class="t" style="top:140px;font:700 13px/15px 'Liberation Sans', sans-serif;color:#8a8a8a;left:1317px;">#</span>
<span class="t" style="top:140px;font:700 13px/15px 'Liberation Sans', sans-serif;color:#8a8a8a;left:1513px;">[0]</span>
<span class="t" style="top:140px;font:700 13px/15px 'Liberation Sans', sans-serif;color:#8a8a8a;left:1929px;">fc</span>
<span class="t" style="top:164px;font:400 13px/15px 'Liberation Sans', sans-serif;color:#cccccc;left:1282px;">1</span>
<span class="t" style="top:164px;font:400 13px/15px 'Liberation Sans', sans-serif;color:#cccccc;left:1372px;letter-spacing:0.166px;">memset</span>
<span class="t" style="top:164px;font:400 13px/15px 'Liberation Sans', sans-serif;color:#4daafc;left:1698px;">call to memset</span>
<span class="t" style="top:186px;font:400 13px/15px 'Liberation Sans', sans-serif;color:#cccccc;left:1283px;">2</span>
<span class="t" style="top:186px;font:400 13px/15px 'Liberation Sans', sans-serif;color:#cccccc;left:1372px;letter-spacing:-0.339px;">example_1</span>
<span class="t" style="top:186px;font:400 13px/15px 'Liberation Sans', sans-serif;color:#4daafc;left:1698px;">call to example_1</span>
<span class="t" style="top:209px;font:400 13px/15px 'Liberation Sans', sans-serif;color:#cccccc;left:1283px;">3</span>
<span class="t" style="top:209px;font:400 13px/15px 'Liberation Sans', sans-serif;color:#cccccc;left:1372px;letter-spacing:-0.022px;">read_byte</span>
<span class="t" style="top:209px;font:400 13px/15px 'Liberation Sans', sans-serif;color:#4daafc;left:1698px;">call to read_byte</span>
</div>
</body></html>
